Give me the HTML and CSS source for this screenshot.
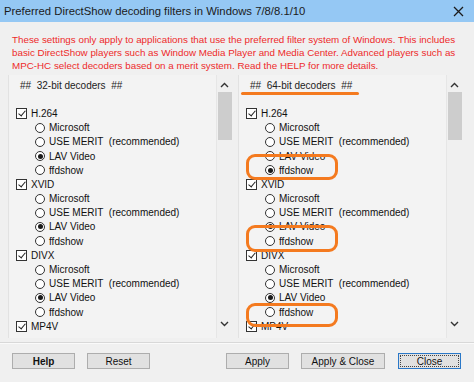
FILE: index.html
```
<!DOCTYPE html>
<html lang="en">
<head>
    <meta charset="UTF-8">
    <meta name="viewport" content="width=device-width, initial-scale=1.0">
    <link rel="stylesheet" href="styles.css">
</head>
<body>
    <div class="window">
        <!-- Title bar -->
        <div class="titlebar">
            <span class="title">Preferred DirectShow decoding filters in Windows 7/8/8.1/10</span>
            <svg class="close-x" width="11" height="11" viewBox="0 0 11 11"><path d="M1 1 L10 10 M10 1 L1 10" stroke="#1b1b1b" stroke-width="1.3" fill="none"/></svg>
        </div>

        <div class="notice">
            These settings only apply to applications that use the preferred filter system of Windows. This includes<br>
            basic DirectShow players such as Window Media Player and Media Center. Advanced players such as<br>
            MPC-HC select decoders based on a merit system. Read the HELP for more details.
        </div>

        <div class="panels">
            <!-- 32-bit -->
            <div class="panel">
                <div class="list">
                    <div class="row head">##  32-bit decoders  ##</div>
                    <div class="row"></div>
                    <div class="row"><span class="check"></span>H.264</div>
                    <div class="row sub"><span class="radio"></span>Microsoft</div>
                    <div class="row sub"><span class="radio"></span>USE MERIT  (recommended)</div>
                    <div class="row sub"><span class="radio on"></span>LAV Video</div>
                    <div class="row sub"><span class="radio"></span>ffdshow</div>
                    <div class="row"><span class="check"></span>XVID</div>
                    <div class="row sub"><span class="radio"></span>Microsoft</div>
                    <div class="row sub"><span class="radio"></span>USE MERIT  (recommended)</div>
                    <div class="row sub"><span class="radio on"></span>LAV Video</div>
                    <div class="row sub"><span class="radio"></span>ffdshow</div>
                    <div class="row"><span class="check"></span>DIVX</div>
                    <div class="row sub"><span class="radio"></span>Microsoft</div>
                    <div class="row sub"><span class="radio"></span>USE MERIT  (recommended)</div>
                    <div class="row sub"><span class="radio on"></span>LAV Video</div>
                    <div class="row sub"><span class="radio"></span>ffdshow</div>
                    <div class="row"><span class="check"></span>MP4V</div>
                </div>
                <div class="scrollbar">
                    <svg class="arrow" width="9" height="6" viewBox="0 0 9 6"><path d="M1 5 L4.5 1.5 L8 5" stroke="#333" stroke-width="1.4" fill="none"/></svg>
                    <div class="thumb"></div>
                    <div class="track"></div>
                    <svg class="arrow" width="9" height="6" viewBox="0 0 9 6"><path d="M1 1 L4.5 4.5 L8 1" stroke="#333" stroke-width="1.4" fill="none"/></svg>
                </div>
            </div>

            <!-- 64-bit -->
            <div class="panel marked">
                <div class="list">
                    <div class="row head">##  64-bit decoders  ##</div>
                    <div class="row"></div>
                    <div class="row"><span class="check"></span>H.264</div>
                    <div class="row sub"><span class="radio"></span>Microsoft</div>
                    <div class="row sub"><span class="radio"></span>USE MERIT  (recommended)</div>
                    <div class="row sub"><span class="radio"></span>LAV Video</div>
                    <div class="row sub"><span class="radio on"></span>ffdshow</div>
                    <div class="row"><span class="check"></span>XVID</div>
                    <div class="row sub"><span class="radio"></span>Microsoft</div>
                    <div class="row sub"><span class="radio"></span>USE MERIT  (recommended)</div>
                    <div class="row sub"><span class="radio on"></span>LAV Video</div>
                    <div class="row sub"><span class="radio"></span>ffdshow</div>
                    <div class="row"><span class="check"></span>DIVX</div>
                    <div class="row sub"><span class="radio"></span>Microsoft</div>
                    <div class="row sub"><span class="radio"></span>USE MERIT  (recommended)</div>
                    <div class="row sub"><span class="radio on"></span>LAV Video</div>
                    <div class="row sub"><span class="radio"></span>ffdshow</div>
                    <div class="row"><span class="check"></span>MP4V</div>
                </div>
                <div class="scrollbar">
                    <svg class="arrow" width="9" height="6" viewBox="0 0 9 6"><path d="M1 5 L4.5 1.5 L8 5" stroke="#333" stroke-width="1.4" fill="none"/></svg>
                    <div class="thumb"></div>
                    <div class="track"></div>
                    <svg class="arrow" width="9" height="6" viewBox="0 0 9 6"><path d="M1 1 L4.5 4.5 L8 1" stroke="#333" stroke-width="1.4" fill="none"/></svg>
                </div>

                <!-- orange annotations drawn over the list -->
                <div class="mark underline"></div>
                <div class="mark box box1"></div>
                <div class="mark box box2"></div>
                <div class="mark box box3"></div>
            </div>
        </div>

        <div class="footer">
            <button class="btn bold">Help</button>
            <button class="btn">Reset</button>
            <button class="btn push">Apply</button>
            <button class="btn wide">Apply &amp; Close</button>
            <button class="btn default">Close</button>
        </div>
    </div>
</body>
</html>
```

FILE: styles.css
```
body {
    margin: 0;
    padding: 0;
    background-color: #f0f0f0;
    font-family: "Liberation Sans", Arial, sans-serif;
    color: #1a1a1a;
}

.window {
    width: 474px;
    height: 382px;
    overflow: hidden;
}

.titlebar {
    height: 22px;
    background-color: #95c8f4;
    display: flex;
    align-items: center;
    justify-content: space-between;
    padding: 0 10px 0 4px;
}

.title {
    font-size: 11.3px;
    color: #1b1b1b;
}

.notice {
    color: #ee2a2a;
    font-size: 9.8px;
    line-height: 13px;
    padding: 11px 8px 0 12px;
    height: 42px;
}

.panels {
    display: flex;
    gap: 6px;
    padding: 0 12px 0 8px;
}

.panel {
    position: relative;
    flex: 1;
    height: 263px;
    display: flex;
    background-color: #f3f3f3;
    border-left: 1px solid #e2e2e2;
    overflow: hidden;
}

.list {
    flex: 1;
    padding-top: 3px;
    padding-left: 7px;
    font-size: 10px;
}

.row {
    height: 14.2px;
    display: flex;
    align-items: center;
    white-space: pre;
    color: #111;
}

.row.head {
    padding-left: 4px;
    color: #222;
}

.row.sub {
    padding-left: 19px;
}

.check {
    width: 9px;
    height: 9px;
    border: 1px solid #333;
    background-color: #fff;
    margin-right: 4px;
    position: relative;
}

    .check::after {
        content: "";
        position: absolute;
        left: 3px;
        top: 0px;
        width: 3px;
        height: 6px;
        border-right: 1.3px solid #222;
        border-bottom: 1.3px solid #222;
        transform: rotate(40deg);
    }

.radio {
    width: 10px;
    height: 10px;
    border: 1px solid #333;
    border-radius: 50%;
    background-color: #fff;
    margin-right: 4px;
    box-sizing: border-box;
    display: flex;
    align-items: center;
    justify-content: center;
}

    .radio.on::after {
        content: "";
        width: 5px;
        height: 5px;
        border-radius: 50%;
        background-color: #1a1a1a;
    }

.scrollbar {
    width: 15px;
    display: flex;
    flex-direction: column;
    align-items: center;
    border-left: 1px solid #e6e6e6;
    background-color: #f0f0f0;
}

    .scrollbar .arrow {
        margin: 7px 0 4px;
    }

    .scrollbar .arrow:last-child {
        margin: 5px 0 11px;
    }

.thumb {
    width: 14px;
    height: 48px;
    background-color: #cdcdcd;
}

.track {
    flex: 1;
}

.mark {
    position: absolute;
    border-color: #f47a1f;
}

.underline {
    left: 2px;
    top: 17px;
    width: 118px;
    height: 3px;
    border-radius: 2px;
    background-color: #f47a1f;
}

.box {
    left: 7px;
    width: 86px;
    border: 3px solid #f47a1f;
    border-radius: 9px;
}

.box1 {
    top: 79px;
    height: 20px;
}

.box2 {
    top: 150px;
    height: 21px;
}

.box3 {
    top: 228px;
    height: 18px;
}

.footer {
    margin-top: 4px;
    border-top: 1px solid #d8d8d8;
    box-shadow: inset 0 1px 0 #fafafa;
    display: flex;
    gap: 12px;
    padding: 10px 13px 0 12px;
}

.btn {
    width: 63px;
    height: 16px;
    padding: 0;
    background-color: #e1e1e1;
    border: 1px solid #adadad;
    font-family: "Liberation Sans", Arial, sans-serif;
    font-size: 10px;
    color: #111;
}

.btn.bold {
    font-weight: bold;
}

.btn.push {
    margin-left: auto;
}

.btn.wide {
    width: 84px;
}

.btn.default {
    border: 1px solid #2a78c8;
    outline: 1px dotted #444;
    outline-offset: -3px;
    margin-left: 1px;
}
```
